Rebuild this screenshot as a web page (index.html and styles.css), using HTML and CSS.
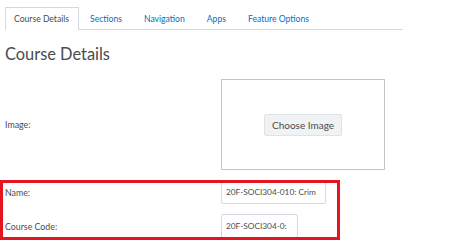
FILE: index.html
```html
<!DOCTYPE html>
<html>
<head>
<meta charset="utf-8">
<link rel="stylesheet" href="styles.css">
</head>
<body>
<div class="page">
  <nav class="tabs">
    <span class="tab active">Course Details</span>
    <span class="tab">Sections</span>
    <span class="tab">Navigation</span>
    <span class="tab">Apps</span>
    <span class="tab">Feature Options</span>
  </nav>
  <h1 class="title">Course Details</h1>
  <div class="form">
    <div class="row row-image">
      <label class="label">Image:</label>
      <div class="image-box"><button class="btn">Choose Image</button></div>
    </div>
    <div class="row row-name">
      <label class="label">Name:</label>
      <div class="input input-name">20F-SOCI304-010: Crim</div>
    </div>
    <div class="row row-code">
      <label class="label">Course Code:</label>
      <div class="input input-code">20F-SOCI304-0:</div>
    </div>
    <div class="highlight"></div>
  </div>
</div>
</body>
</html>
```
FILE: styles.css
```css
* { box-sizing: border-box; }
html, body { margin: 0; padding: 0; background: #fff; }
body { font-family: Lato, "Noto Sans", sans-serif; color: #494c4e; overflow: hidden; width: 474px; height: 240px; }
.page { padding: 7px 0 0 5px; }
.tabs {
  display: flex;
  width: 398px;
  border-bottom: 1px solid #d3d9e3;
  height: 23px;
}
.tab {
  font-size: 8.6px;
  color: #006fbf;
  padding: 0 10px;
  height: 23px;
  line-height: 22px;
  border: 1px solid transparent;
  border-bottom: none;
}
.tab.active {
  color: #494c4e;
  background: #fff;
  border-color: #d3d9e3;
  padding: 0 9px 0 8px;
  height: 23px;
  margin-bottom: -1px;
}
.title {
  font-size: 16.4px;
  font-weight: 400;
  margin: 14px 0 0 0;
  line-height: 20px;
  color: #494c4e;
}
.form { position: relative; margin-left: -5px; margin-top: 15px; }
.row {
  display: grid;
  grid-template-columns: 221px auto;
  align-items: center;
}
.label { font-size: 8.8px; padding-left: 5px; color: #494c4e; }
.row-image { height: 91px; }
.image-box {
  width: 164px;
  height: 91px;
  border: 1px solid #c5c5c5;
  display: flex;
  align-items: center;
  justify-content: center;
}
.btn {
  font-family: Lato, "Noto Sans", sans-serif;
  font-size: 10px;
  color: #494c4e;
  background: #f1f2f3;
  border: 1px solid #dfe2e6;
  border-radius: 2px;
  width: 78px;
  height: 22px;
  padding: 0;
}
.row-name { margin-top: 10px; }
.row-code { margin-top: 10px; }
.input {
  font-size: 8.3px;
  height: 24px;
  line-height: 22px;
  border: 1px solid #d3d9e3;
  border-radius: 2px;
  padding: 0 4px;
  white-space: nowrap;
  overflow: hidden;
  color: #494c4e;
}
.input-name { width: 105px; }
.input-code { width: 77px; }
.highlight {
  position: absolute;
  left: 0;
  top: 101px;
  width: 340px;
  height: 60px;
  border: 3px solid #e4151f;
}
```
